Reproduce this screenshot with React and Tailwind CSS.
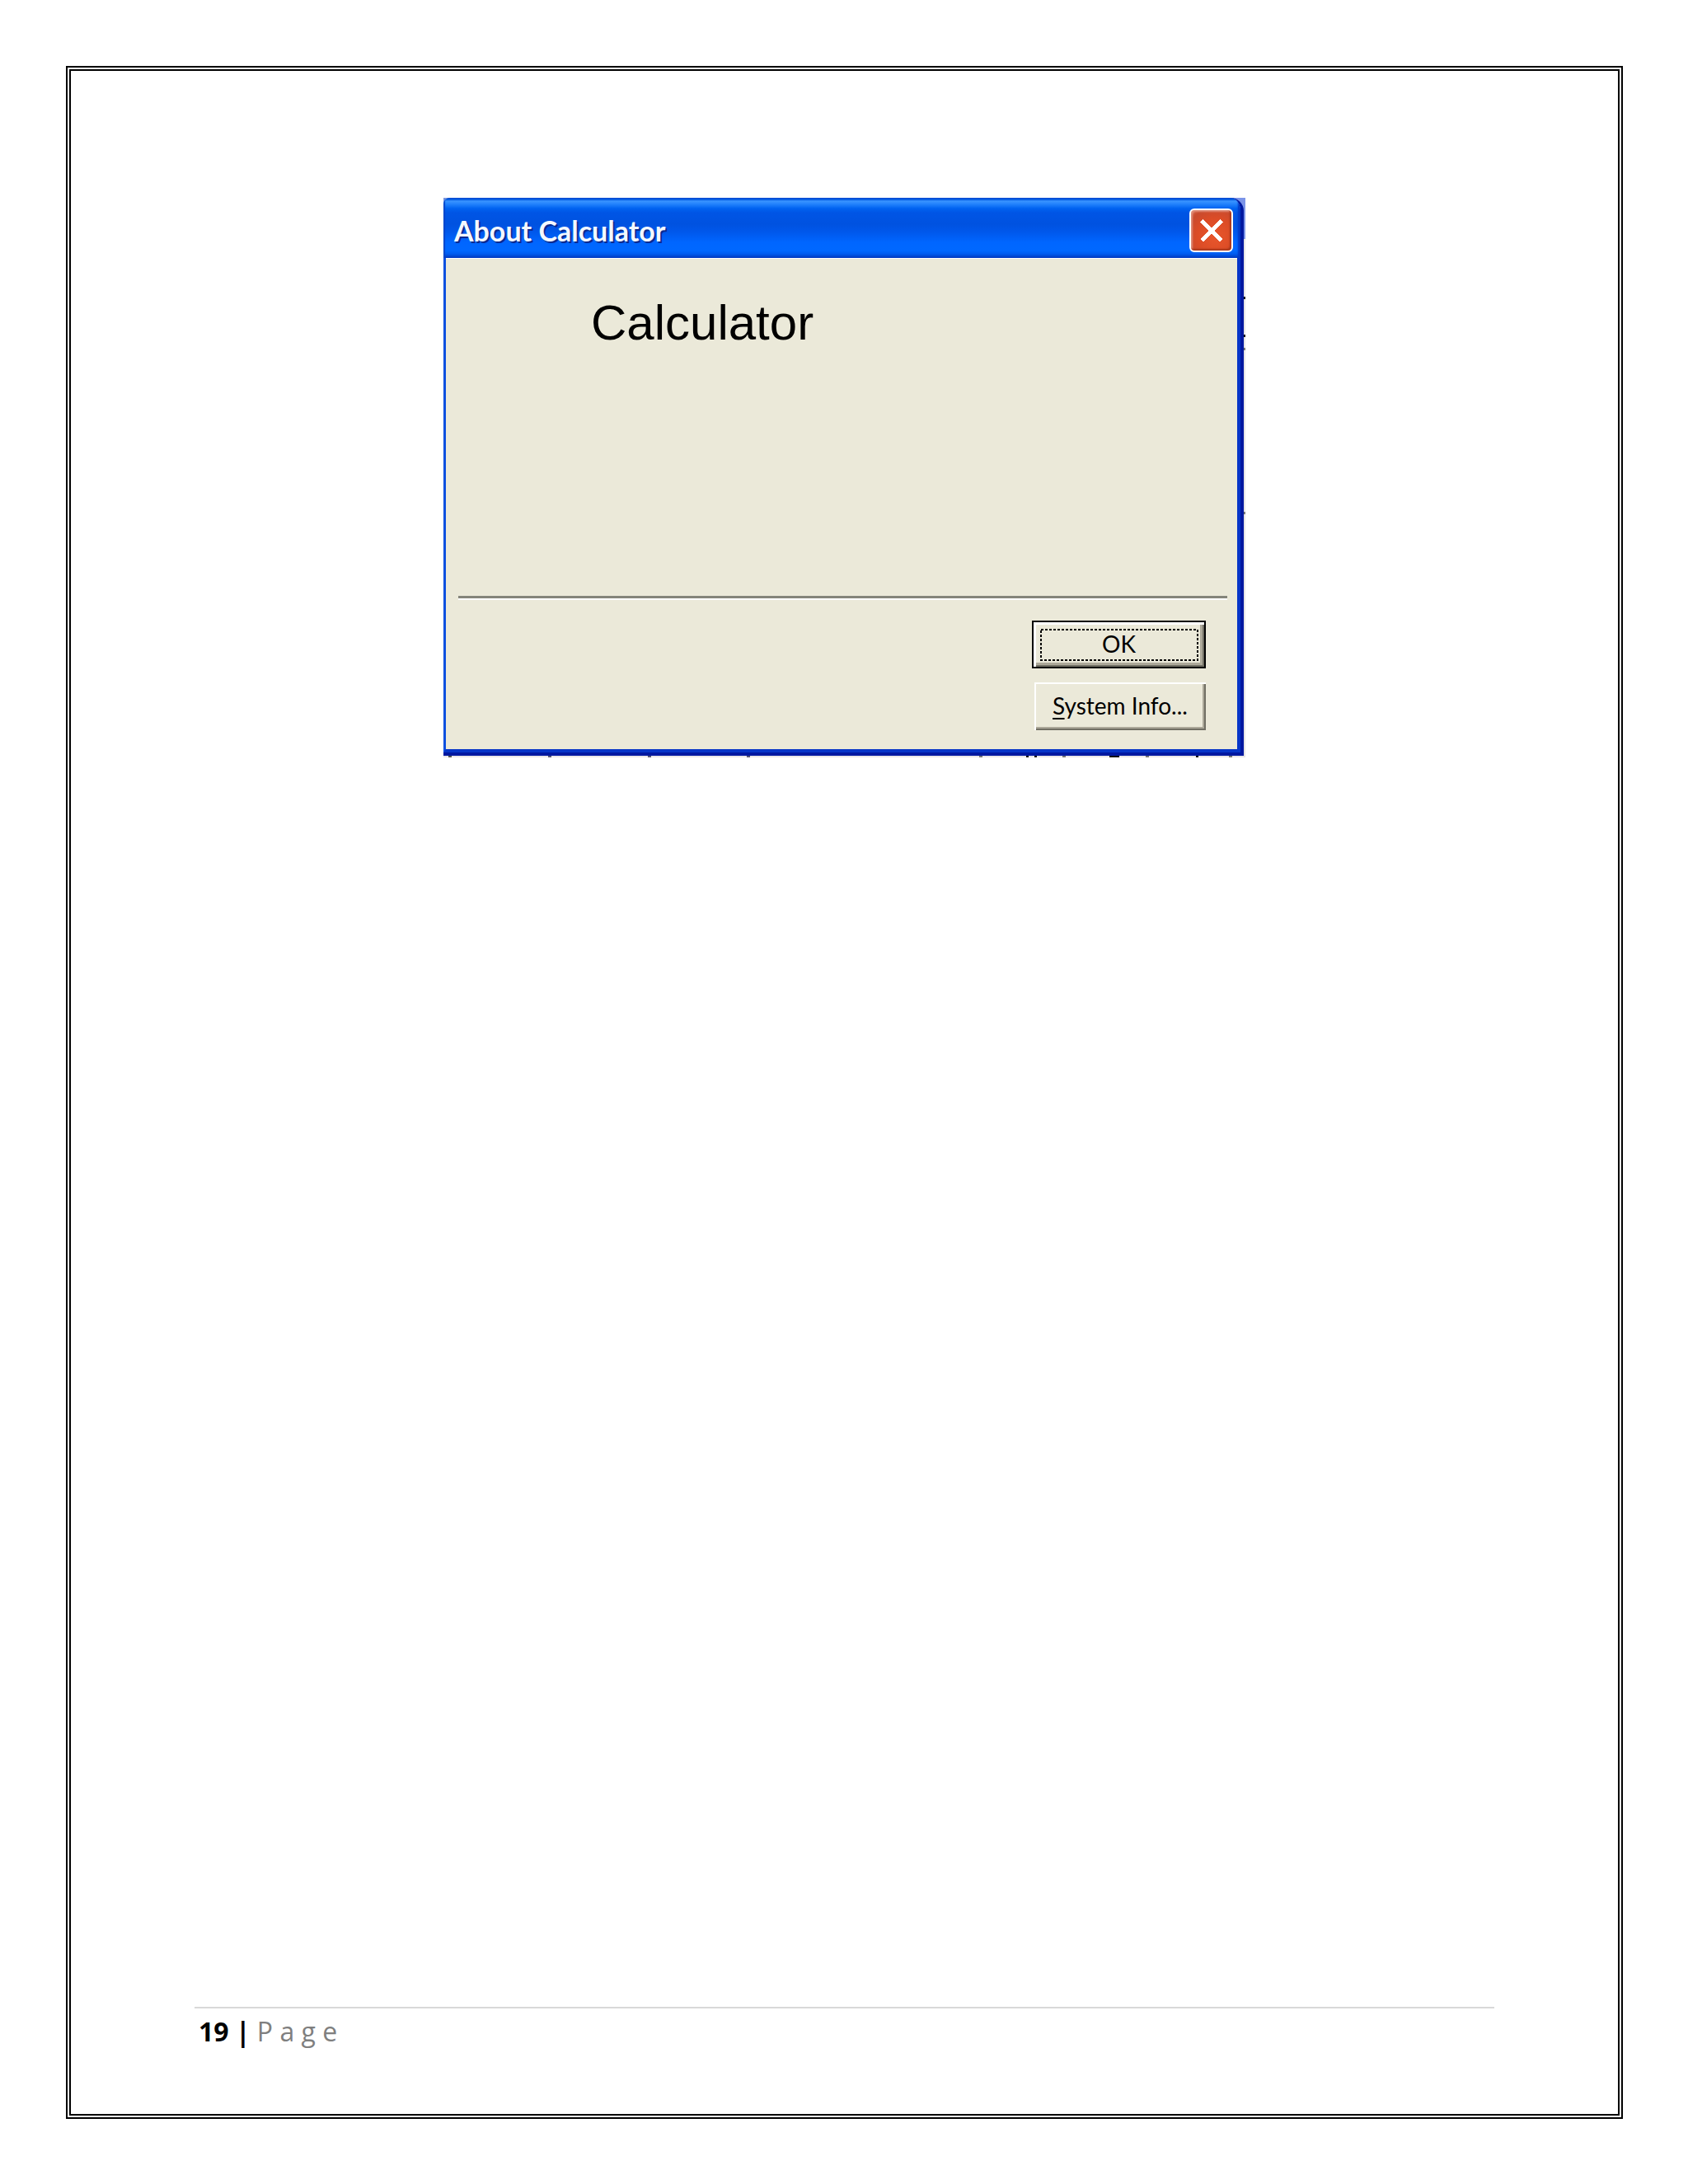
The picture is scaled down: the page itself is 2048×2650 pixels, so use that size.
import React from 'react';

// Bits of the desktop that peek out past the right and bottom window edges
const SIDE_MARKS = [
  { y: 120, color: '#111111' },
  { y: 166, color: '#111111' },
  { y: 182, color: '#777777' },
  { y: 381, color: '#777777' },
];

const BOTTOM_MARKS = [
  { x: 6, w: 4, color: '#555555' },
  { x: 127, w: 4, color: '#555577' },
  { x: 248, w: 4, color: '#555577' },
  { x: 368, w: 4, color: '#555577' },
  { x: 650, w: 4, color: '#777777' },
  { x: 707, w: 3, color: '#111111' },
  { x: 717, w: 3, color: '#111111' },
  { x: 751, w: 4, color: '#777777' },
  { x: 808, w: 12, color: '#111111' },
  { x: 852, w: 4, color: '#777777' },
  { x: 913, w: 3, color: '#111111' },
  { x: 953, w: 4, color: '#777777' },
];

function DesktopRemains() {
  return (
    <svg className="absolute left-0 top-0 -z-10 overflow-visible" width="974" height="680" aria-hidden="true">
      <rect x="0" y="0" width="12" height="12" fill="#7a96df" />
      <rect x="955" y="0" width="18" height="50" fill="#7b94e8" />
      <rect x="971" y="50" width="2" height="627" fill="#e6e4e6" />
      <rect x="0" y="677" width="973" height="2" fill="#e8e6e8" />
      {SIDE_MARKS.map((m) => (
        <rect key={m.y} x="969" y={m.y} width="4" height="3" fill={m.color} />
      ))}
      {BOTTOM_MARKS.map((m) => (
        <rect key={m.x} x={m.x} y="676" width={m.w} height="3" fill={m.color} />
      ))}
    </svg>
  );
}

function CloseButton() {
  return (
    <button
      type="button"
      aria-label="Close"
      className="flex size-[53px] shrink-0 items-center justify-center rounded-md border-2 border-white bg-[radial-gradient(circle_at_60%_65%,#e8562c_0%,#dc4c26_50%,#c84a2e_80%,#d8694e_100%)] shadow-[inset_-2px_-2px_2px_#a8381c,inset_2px_2px_2px_#e08c78]"
    >
      <svg width="30" height="30" viewBox="0 0 30 30" shapeRendering="crispEdges" aria-hidden="true">
        <path d="M3 3 L27 27 M27 3 L3 27" stroke="#ffffff" strokeWidth="5" />
      </svg>
    </button>
  );
}

function AboutDialog() {
  return (
    <div className="relative isolate w-[973px] max-w-full pr-[2px]">
      <DesktopRemains />
      <section
        aria-labelledby="dialog-title"
        className="overflow-hidden rounded-tl-lg rounded-tr-2xl border-r-4 border-b-4 border-[#0018a0]"
      >
        <header className="flex h-[73px] items-center justify-between bg-[linear-gradient(to_bottom,#0054d8_0px,#0058e0_2px,#3a94ff_4px,#2080fc_8px,#0062f0_13px,#0055e5_18px,#0052e0_32px,#0058ec_42px,#0066ff_54px,#0068ff_64px,#005cf0_68px,#0040c8_72px,#003cc0_73px)] pl-[13px] pr-[9px] pt-[6px] shadow-[inset_-3px_0_2px_#0038c8,inset_2px_0_1px_#0048cc]">
          <h1
            id="dialog-title"
            className="font-['Lato',sans-serif] text-[34px] leading-[40px] font-bold text-[#f4f8ff] [text-shadow:2px_2px_0_#0a2a90]"
          >
            About Calculator
          </h1>
          <CloseButton />
        </header>

        <div className="border-l-[3px] border-r-4 border-b-4 border-l-[#0a50e0] border-r-[#0634c8] border-b-[#0634c8] bg-[#ebe9d9] shadow-[inset_0_1px_0_#ffffff]">
          <div className="h-[410px] pt-[47px] pl-[176px]">
            <h2 className="text-[60px] leading-[64px]">Calculator</h2>
          </div>
          <hr className="mr-[12px] ml-[15px] h-[5px] border-t-3 border-b-2 border-t-[#84847a] border-b-white" />
          <div className="flex flex-col items-end gap-[17px] pt-[25px] pr-[38px] pb-[23px] font-['Lato',sans-serif] text-[28px] leading-[36px]">
            <button
              type="button"
              className="relative h-[58px] w-[211px] border-2 border-black bg-[#ebe9d9] pb-[2px] shadow-[inset_3px_3px_0_#ffffff,inset_-2px_-2px_0_#716f64,inset_-5px_-5px_0_#aca899]"
            >
              OK
              <svg className="absolute top-[8px] left-[8px]" width="192" height="39" shapeRendering="crispEdges" aria-hidden="true">
                <rect x="1" y="1" width="190" height="37" fill="none" stroke="#000000" strokeWidth="2" strokeDasharray="3 2" />
              </svg>
            </button>
            <button
              type="button"
              className="h-[58px] w-[208px] bg-[#ebe9d9] pb-[2px] shadow-[inset_2px_2px_0_#ffffff,inset_-2px_-2px_0_#716f64,inset_-4px_-4px_0_#aca899]"
            >
              <span className="underline decoration-2 underline-offset-4">S</span>ystem Info...
            </button>
          </div>
        </div>
      </section>
    </div>
  );
}

export default function App() {
  return (
    <div className="flex min-h-screen flex-col bg-white pt-20 pr-[79px] pb-[79px] pl-20 font-['Liberation_Sans',sans-serif] text-black">
      <div className="flex flex-1 flex-col border-6 border-double border-black px-[150px] pt-[154px] pb-[78px]">
        <main className="flex flex-1 flex-col items-center">
          <AboutDialog />
        </main>
        <footer className="border-t-2 border-[#d9d9d9] pt-[6px] pl-[5px] font-['Open_Sans',sans-serif] text-[32px] leading-[44px]">
          <p>
            <span className="font-bold">19 | </span>
            <span className="text-[#7f7f7f]">P a g e</span>
          </p>
        </footer>
      </div>
    </div>
  );
}
